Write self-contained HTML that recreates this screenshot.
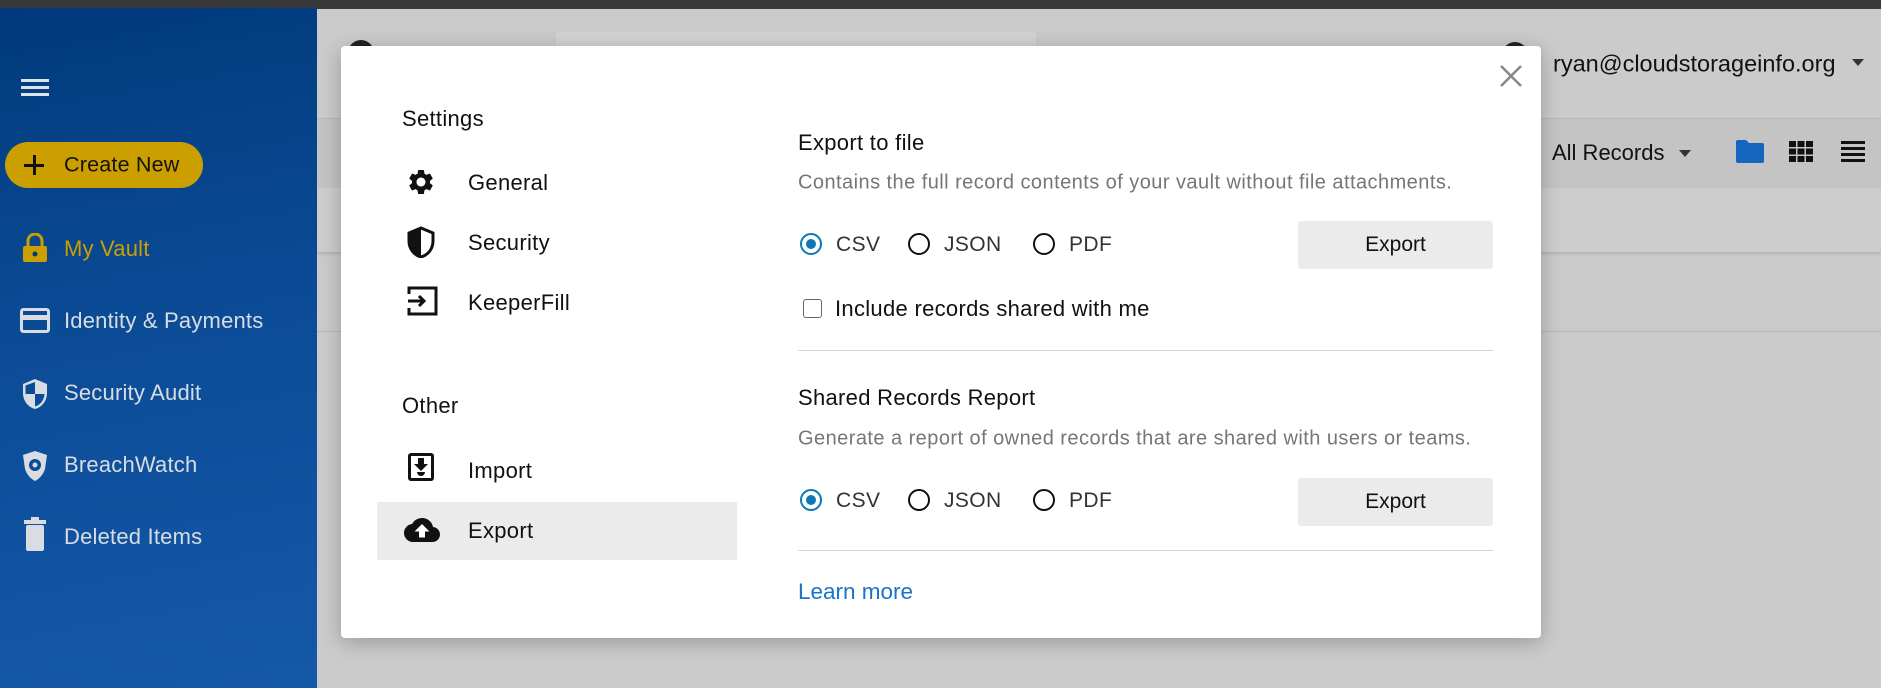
<!DOCTYPE html>
<html><head><meta charset="utf-8"><style>
*{margin:0;padding:0;box-sizing:border-box}
body{width:1881px;height:688px;overflow:hidden;position:relative;background:#cbcbcb;font-family:"Liberation Sans",sans-serif;color:#111}
.a{position:absolute;white-space:nowrap}
.side{left:0;top:8px;width:317px;height:680px;background:linear-gradient(170deg,#013a7c 0%,#0b4b96 45%,#1459a8 100%)}
.nav{left:64px;font-size:22px;letter-spacing:0.2px;color:#d9dde3;transform:translateY(-50%)}
.dlg{left:341px;top:46px;width:1200px;height:592px;background:#fff;border-radius:4px;box-shadow:0 4px 20px rgba(0,0,0,.25)}
.t{font-size:21px;color:#111;transform:translateY(-50%)}
.h{font-size:22px;letter-spacing:0.3px}
.d{font-size:20px;letter-spacing:0.45px;color:#767676;transform:translateY(-50%)}
.r{width:22px;height:22px;border:2.5px solid #111;border-radius:50%;transform:translateY(-50%)}
.r.on{border-color:#0c7ab0}
.r.on::after{content:"";position:absolute;left:3.5px;top:3.5px;width:10px;height:10px;border-radius:50%;background:#0c7ab0}
.btn{width:195px;height:48px;background:#ebebeb;border-radius:3px;font-size:21px;display:flex;align-items:center;justify-content:center;color:#111}
.hr{height:1px;background:#d6d6d6;left:457px;width:695px}
</style></head><body>
<div class="a" style="left:0;top:0;width:1881px;height:9px;background:#38393b"></div>
<div class="a side"></div>
<div class="a" style="left:21px;top:79px;width:28px;height:3px;background:#dfe3e8;box-shadow:0 7px 0 #dfe3e8,0 14px 0 #dfe3e8"></div>
<div class="a" style="left:5px;top:142px;width:198px;height:46px;border-radius:23px;background:#cc9f00"></div>
<div class="a" style="left:24px;top:155px;width:20px;height:20px">
<div class="a" style="left:9px;top:0;width:3px;height:20px;background:#111"></div><div class="a" style="left:0;top:9px;width:20px;height:3px;background:#111"></div></div>
<div class="a" style="left:64px;top:165px;font-size:21.5px;letter-spacing:0.2px;color:#111;transform:translateY(-50%)">Create New</div>
<svg class="a" style="left:22px;top:233px" width="26" height="30" viewBox="0 0 26 30"><path d="M6 13V8a7 7 0 0 1 14 0v5" fill="none" stroke="#cc9f00" stroke-width="3"/><rect x="1" y="13" width="24" height="16" rx="2" fill="#cc9f00"/><circle cx="13" cy="21" r="2.5" fill="#013a7c"/></svg>
<div class="a nav" style="top:249px;color:#cc9f00">My Vault</div>
<svg class="a" style="left:20px;top:308px" width="30" height="25" viewBox="0 0 30 25"><rect x="1.5" y="1.5" width="27" height="22" rx="2" fill="none" stroke="#d9dde3" stroke-width="3"/><rect x="1.5" y="7" width="27" height="5" fill="#d9dde3"/></svg>
<div class="a nav" style="top:321px">Identity &amp; Payments</div>
<svg class="a" style="left:21px;top:378px" width="28" height="32" viewBox="0 0 28 32"><path d="M14 1L2 6v9c0 8 5 14 12 16 7-2 12-8 12-16V6z" fill="#d9dde3"/><path d="M14 4v12H4.5V7.5zM14 16h9.5c-.5 6-4 11-9.5 12.5z" fill="#0b4b96"/></svg>
<div class="a nav" style="top:393px">Security Audit</div>
<svg class="a" style="left:21px;top:450px" width="28" height="32" viewBox="0 0 28 32"><path d="M14 1L2 5l2 14c2 6 6 10 10 12 4-2 8-6 10-12l2-14z" fill="#d9dde3"/><circle cx="14" cy="15" r="6" fill="#0b4b96"/><circle cx="14" cy="15" r="2.5" fill="#d9dde3"/></svg>
<div class="a nav" style="top:465px">BreachWatch</div>
<svg class="a" style="left:24px;top:517px" width="22" height="34" viewBox="0 0 22 34"><rect x="0" y="3" width="22" height="4" fill="#d9dde3"/><rect x="7" y="0" width="8" height="4" fill="#d9dde3"/><rect x="2" y="8" width="18" height="26" rx="2" fill="#d9dde3"/></svg>
<div class="a nav" style="top:537px">Deleted Items</div>
<div class="a" style="left:317px;top:118px;width:1564px;height:1px;background:#b8b8b8"></div>
<div class="a" style="left:317px;top:119px;width:1564px;height:69px;background:#c4c4c4"></div>
<div class="a" style="left:317px;top:188px;width:1564px;height:64px;background:#cdcdcd;box-shadow:0 2px 3px rgba(0,0,0,.12)"></div>
<div class="a" style="left:317px;top:331px;width:1564px;height:1px;background:#b5b5b5"></div>
<div class="a" style="left:556px;top:32px;width:480px;height:20px;background:#d3d3d3;border-radius:4px"></div>
<div class="a" style="left:348px;top:40px;width:26px;height:26px;border-radius:50%;background:#222"></div>
<div class="a" style="left:1502px;top:42px;width:26px;height:26px;border-radius:50%;background:#222"></div>
<div class="a" style="left:1553px;top:64px;font-size:23.5px;color:#111;transform:translateY(-50%)">ryan@cloudstorageinfo.org</div>
<div class="a" style="left:1852px;top:59px;border:6px solid transparent;border-top:7px solid #333"></div>
<div class="a" style="left:1552px;top:153px;font-size:22px;color:#111;transform:translateY(-50%)">All Records</div>
<div class="a" style="left:1679px;top:150px;border:6px solid transparent;border-top:7px solid #333"></div>
<svg class="a" style="left:1735px;top:139px" width="30" height="25" viewBox="0 0 30 25"><path d="M1 3a2 2 0 0 1 2-2h8l3 3h13a2 2 0 0 1 2 2v16a2 2 0 0 1-2 2H3a2 2 0 0 1-2-2z" fill="#1565c0"/></svg>
<svg class="a" style="left:1789px;top:141px" width="24" height="21" viewBox="0 0 24 21" fill="#111"><rect x="0" y="0" width="7" height="6"/><rect x="8.5" y="0" width="7" height="6"/><rect x="17" y="0" width="7" height="6"/><rect x="0" y="7.5" width="7" height="6"/><rect x="8.5" y="7.5" width="7" height="6"/><rect x="17" y="7.5" width="7" height="6"/><rect x="0" y="15" width="7" height="6"/><rect x="8.5" y="15" width="7" height="6"/><rect x="17" y="15" width="7" height="6"/></svg>
<svg class="a" style="left:1841px;top:141px" width="24" height="22" viewBox="0 0 24 22" fill="#111"><rect y="0" width="24" height="3"/><rect y="6" width="24" height="3"/><rect y="12" width="24" height="3"/><rect y="18" width="24" height="3"/></svg>
<div class="a dlg">
<svg class="a" style="left:1158px;top:18px" width="24" height="24" viewBox="0 0 24 24"><path d="M2 2L22 22M22 2L2 22" stroke="#888" stroke-width="2.5"/></svg>
<div class="a t h" style="left:61px;top:73px">Settings</div>
<svg class="a" style="left:65px;top:121px" width="30" height="30" viewBox="0 0 24 24"><path fill="#111" d="M19.14 12.94c.04-.3.06-.61.06-.94 0-.32-.02-.64-.07-.94l2.03-1.58a.49.49 0 0 0 .12-.61l-1.92-3.32a.488.488 0 0 0-.59-.22l-2.39.96c-.5-.38-1.030-.7-1.620-.94l-.36-2.54a.484.484 0 0 0-.48-.41h-3.84c-.24 0-.43.17-.47.41l-.36 2.54c-.59.24-1.13.57-1.62.94l-2.39-.96c-.22-.08-.47 0-.59.22L2.74 8.87c-.12.21-.08.47.12.61l2.03 1.58c-.05.3-.09.63-.09.94s.02.64.07.94l-2.03 1.58a.49.49 0 0 0-.12.61l1.92 3.32c.12.22.37.29.59.22l2.39-.96c.5.38 1.03.7 1.62.94l.36 2.54c.05.24.24.41.48.41h3.84c.24 0 .44-.17.47-.41l.36-2.54c.59-.24 1.13-.56 1.62-.94l2.39.96c.22.08.47 0 .59-.22l1.92-3.320c.12-.22.07-.47-.12-.61l-2.01-1.58zM12 15.6c-1.98 0-3.6-1.62-3.6-3.6s1.62-3.6 3.6-3.6 3.6 1.62 3.6 3.6-1.62 3.6-3.6 3.6z"/></svg>
<div class="a t h" style="left:127px;top:137px">General</div>
<svg class="a" style="left:65px;top:180px" width="30" height="32" viewBox="0 0 30 32"><path d="M15 2L3 7v8c0 8 5 14 12 16 7-2 12-8 12-16V7z" fill="none" stroke="#111" stroke-width="3"/><path d="M15 2L3 7v8c0 8 5 14 12 16z" fill="#111"/></svg>
<div class="a t h" style="left:127px;top:197px">Security</div>
<svg class="a" style="left:65px;top:240px" width="32" height="30" viewBox="0 0 32 30"><path d="M3 8V2h27v26H3v-6" fill="none" stroke="#111" stroke-width="3"/><path d="M2 15h16M13 10l5 5-5 5" fill="none" stroke="#111" stroke-width="3"/></svg>
<div class="a t h" style="left:127px;top:257px">KeeperFill</div>
<div class="a t h" style="left:61px;top:360px">Other</div>
<svg class="a" style="left:66px;top:406px" width="28" height="30" viewBox="0 0 28 30"><rect x="1" y="1" width="26" height="28" rx="3" fill="#111"/><rect x="4" y="4" width="20" height="16" fill="#fff"/><path d="M4 20h6a4 4 0 0 0 8 0h6v6H4z" fill="#fff"/><path d="M11 6h6v6h4l-7 7-7-7h4z" fill="#111"/></svg>
<div class="a t h" style="left:127px;top:425px">Import</div>
<div class="a" style="left:36px;top:456px;width:360px;height:58px;background:#ebebeb"></div>
<svg class="a" style="left:63px;top:470px" width="36" height="28" viewBox="0 0 24 18"><path fill="#111" d="M19.35 7.04A7.49 7.49 0 0 0 12 1C9.11 1 6.6 2.64 5.35 5.04A5.994 5.994 0 0 0 0 11c0 3.31 2.69 6 6 6h13c2.76 0 5-2.24 5-5 0-2.64-2.050-4.78-4.650-4.96z"/><path fill="#fff" d="M14 10v4h-4v-4H7l5-5 5 5z"/></svg>
<div class="a t h" style="left:127px;top:485px">Export</div>
<div class="a t h" style="left:457px;top:97px">Export to file</div>
<div class="a d" style="left:457px;top:137px">Contains the full record contents of your vault without file attachments.</div>
<div class="a r on" style="left:459px;top:198px"></div>
<div class="a t" style="left:495px;top:199px;color:#333;letter-spacing:0.4px">CSV</div>
<div class="a r" style="left:567px;top:198px"></div>
<div class="a t" style="left:603px;top:199px;color:#333;letter-spacing:0.4px">JSON</div>
<div class="a r" style="left:692px;top:198px"></div>
<div class="a t" style="left:728px;top:199px;color:#333;letter-spacing:0.4px">PDF</div>
<div class="a btn" style="left:957px;top:175px">Export</div>
<div class="a" style="left:462px;top:253px;width:19px;height:19px;border:1.5px solid #666;border-radius:3px"></div>
<div class="a t" style="left:494px;top:263px;font-size:22px;letter-spacing:0.3px">Include records shared with me</div>
<div class="a hr" style="top:304px"></div>
<div class="a t h" style="left:457px;top:352px">Shared Records Report</div>
<div class="a d" style="left:457px;top:393px">Generate a report of owned records that are shared with users or teams.</div>
<div class="a r on" style="left:459px;top:454px"></div>
<div class="a t" style="left:495px;top:455px;color:#333;letter-spacing:0.4px">CSV</div>
<div class="a r" style="left:567px;top:454px"></div>
<div class="a t" style="left:603px;top:455px;color:#333;letter-spacing:0.4px">JSON</div>
<div class="a r" style="left:692px;top:454px"></div>
<div class="a t" style="left:728px;top:455px;color:#333;letter-spacing:0.4px">PDF</div>
<div class="a btn" style="left:957px;top:432px">Export</div>
<div class="a hr" style="top:504px"></div>
<div class="a t" style="left:457px;top:546px;font-size:22.5px;color:#1a73c8">Learn more</div>
</div>
</body></html>
